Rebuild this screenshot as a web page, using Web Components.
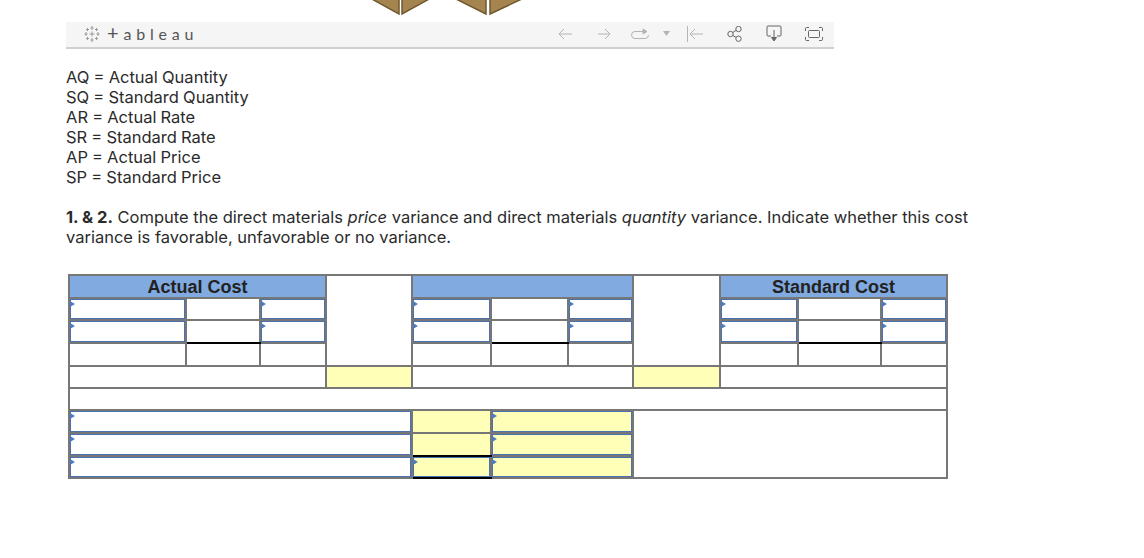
<!DOCTYPE html>
<html>
<head>
<meta charset="utf-8">
<title>Variance</title>
<style>
body { margin: 0; background: #fff; font-family: "Inter", "Open Sans", sans-serif; color: #2b2b2b; }
</style>
</head>
<body>
<top-arrows></top-arrows>
<tableau-bar></tableau-bar>
<legend-list>
    <div>AQ = Actual Quantity</div>
    <div>SQ = Standard Quantity</div>
    <div>AR = Actual Rate</div>
    <div>SR = Standard Rate</div>
    <div>AP = Actual Price</div>
    <div>SP = Standard Price</div>
</legend-list>
<question-text><b>1. &amp; 2.</b> Compute the direct materials <i>price</i> variance and direct materials <i>quantity</i> variance. Indicate whether this cost variance is favorable, unfavorable or no variance.</question-text>
<variance-table></variance-table>

<script>
class TopArrows extends HTMLElement {
    constructor() {
        super();
        this.attachShadow({ mode: 'open' });
        this.shadowRoot.innerHTML = `
            <style>
                :host { display: flex; height: 22px; padding-left: 373px; gap: 29px; }
                svg { display: block; overflow: visible; }
                path { fill: #a5844f; stroke: #6f5a2e; stroke-width: 1.5; }
            </style>
            <svg width="55" height="15" viewBox="0 0 55 15"><path d="M-3 -2L26 14V-2zM29 -2V14L58 -2z"/></svg>
            <svg width="64" height="15" viewBox="0 0 64 15"><path d="M-3 -2L29 14V-2zM33 -2V14L67 -2z"/></svg>
        `;
    }
}

class TableauBar extends HTMLElement {
    constructor() {
        super();
        this.attachShadow({ mode: 'open' });
        this.shadowRoot.innerHTML = `
            <style>
                :host { display: flex; align-items: center; box-sizing: border-box; width: 768px; height: 27px; margin-left: 66px; padding: 0 11px 2px 17px; background: #f5f5f5; border-bottom: 2px solid #d0d0d0; }
                .logo { display: flex; align-items: center; gap: 6px; color: #555; font: 400 16px "Lato", sans-serif; letter-spacing: 4.800px; }
                .logo b { font-weight: 400; font-size: 20px; line-height: 16px; }
                .tools { margin-left: auto; display: flex; align-items: center; }
                svg { display: block; fill: none; stroke-width: 1; }
                .off { stroke: #b4b4b4; }
                .on { stroke: #666; }
            </style>
            <div class="logo">
                <svg width="18" height="18" viewBox="0 0 18 18" stroke="#999"><path d="M9 1v4M7.500 3h3M9 13v4M7.500 15h3M3 7v4M1.500 9h3M15 7v4M13.500 9h3M9 6.500v5M6.500 9h5M4.500 3v3M3 4.500h3M13.500 3v3M12 4.500h3M4.500 12v3M3 13.500h3M13.500 12v3M12 13.500h3"/></svg>
                <span><b>+</b>ableau</span>
            </div>
            <div class="tools">
                <svg class="off" width="14" height="12" viewBox="0 0 14 12"><path d="M14 6H1M6 1L1 6l5 5"/></svg>
                <svg class="off" style="margin-left:26px" width="13" height="12" viewBox="0 0 13 12"><path d="M0 6h12M7 1l5 5-5 5"/></svg>
                <svg class="off" style="margin-left:20px" width="19" height="12" viewBox="0 0 19 12"><path d="M12 3.500H4a3.500 3.500 0 0 0 0 7h10a3.500 3.500 0 0 0 3.500-3.500"/><path d="M12 1v5l4-2.500z" fill="#b4b4b4"/></svg>
                <svg style="margin-left:13px" width="7" height="5" viewBox="0 0 7 5"><path d="M0 0h7L3.500 5z" fill="#b4b4b4"/></svg>
                <svg class="off" style="margin-left:17px" width="16" height="16" viewBox="0 0 16 16"><path d="M.5 0v16M16 8H3M8 3L3 8l5 5"/></svg>
                <svg class="on" style="margin-left:24px" width="16" height="16" viewBox="0 0 16 16"><circle cx="3.500" cy="8" r="2.700"/><circle cx="11.500" cy="3" r="2.700"/><circle cx="11.500" cy="12.700" r="2.700"/><path d="M5.800 6.500l3.400-2.200M5.800 9.500l3.400 2"/></svg>
                <svg class="on" style="margin-left:23px" width="16" height="17" viewBox="0 0 16 17"><path d="M5 11H2a1 1 0 0 1-1-1V2a1 1 0 0 1 1-1h12a1 1 0 0 1 1 1v8a1 1 0 0 1-1 1h-3M8 5v8"/><path d="M5.500 12.500h5L8 16z" fill="#666"/></svg>
                <svg class="on" style="margin-left:23px" width="18" height="14" viewBox="0 0 18 14"><rect x="3.500" y="3.500" width="11" height="7" rx="1"/><path d="M.5 4V1.500a1 1 0 0 1 1-1H4M14 .5h2.500a1 1 0 0 1 1 1V4M17.500 10v2.500a1 1 0 0 1-1 1H14M4 13.500H1.500a1 1 0 0 1-1-1V10"/></svg>
            </div>
        `;
    }
}

class LegendList extends HTMLElement {
    constructor() {
        super();
        this.attachShadow({ mode: 'open' });
        this.shadowRoot.innerHTML = `
            <style>
                :host { display: block; margin: 18px 0 0 66px; font-size: 16.500px; line-height: 20px; word-spacing: -0.500px; }
            </style>
            <slot></slot>
        `;
    }
}

class QuestionText extends HTMLElement {
    constructor() {
        super();
        this.attachShadow({ mode: 'open' });
        this.shadowRoot.innerHTML = `
            <style>
                :host { display: block; width: 915px; margin: 20px 0 0 66px; font-size: 16.500px; line-height: 20px; }
            </style>
            <slot></slot>
        `;
    }
}

class VarianceTable extends HTMLElement {
    constructor() {
        super();
        this.attachShadow({ mode: 'open' });
        const cols = [117, 74, 66, 86, 79, 77, 65, 87, 78, 83, 66];
        const input = (h, yellow) => `<div class="in${yellow ? ' y' : ''}" style="height:${h}px"></div>`;
        const inputs = (h) => `<td>${input(h)}</td><td></td><td>${input(h)}</td>`;
        const underlined = (h) => `<td>${input(h)}</td><td class="under"></td><td>${input(h)}</td>`;
        const plain = '<td></td><td></td><td></td>';

        this.shadowRoot.innerHTML = `
            <style>
                :host { display: block; margin: 27px 0 0 68px; width: 880px; }
                table { border-collapse: collapse; table-layout: fixed; width: 880px; }
                td, th { border: 2px solid #777; padding: 0; }
                td { background: #fff; }
                th { background: #80aae0; color: #222; font: bold 18px "Liberation Sans", Arial, sans-serif; text-align: center; overflow: hidden; line-height: 20px; }
                .yel { background: #ffffb8; }
                td.under { border-bottom-color: #000; }
                .in { box-sizing: border-box; background: #fff; border: 1.500px solid #4a72b0; position: relative; }
                .in.y { background: #ffffb8; }
                .in::before { content: ""; position: absolute; left: -1px; top: 1px; border-left: 5px solid #4a7cc4; border-top: 3.500px solid transparent; border-bottom: 3.500px solid transparent; }
            </style>
            <table>
                <colgroup>${cols.map((w) => `<col style="width:${w}px">`).join('')}</colgroup>
                <tr style="height:23px"><th colspan="3">Actual Cost</th><td rowspan="4"></td><th colspan="3"></th><td rowspan="4"></td><th colspan="3">Standard Cost</th></tr>
                <tr style="height:22px">${inputs(20)}${inputs(20)}${inputs(20)}</tr>
                <tr style="height:23px">${underlined(21)}${underlined(21)}${underlined(21)}</tr>
                <tr style="height:23px">${plain}${plain}${plain}</tr>
                <tr style="height:22px"><td colspan="3"></td><td class="yel"></td><td colspan="3"></td><td class="yel"></td><td colspan="3"></td></tr>
                <tr style="height:22px"><td colspan="11"></td></tr>
                <tr style="height:23px"><td colspan="4">${input(21)}</td><td class="yel"></td><td colspan="2" class="yel">${input(21, true)}</td><td colspan="4" rowspan="3"></td></tr>
                <tr style="height:23px"><td colspan="4">${input(21)}</td><td class="yel under"></td><td colspan="2" class="yel">${input(21, true)}</td></tr>
                <tr style="height:22px"><td colspan="4">${input(20)}</td><td class="yel under">${input(20, true)}</td><td colspan="2" class="yel">${input(20, true)}</td></tr>
            </table>
        `;
    }
}

customElements.define('top-arrows', TopArrows);
customElements.define('tableau-bar', TableauBar);
customElements.define('legend-list', LegendList);
customElements.define('question-text', QuestionText);
customElements.define('variance-table', VarianceTable);
</script>
</body>
</html>
